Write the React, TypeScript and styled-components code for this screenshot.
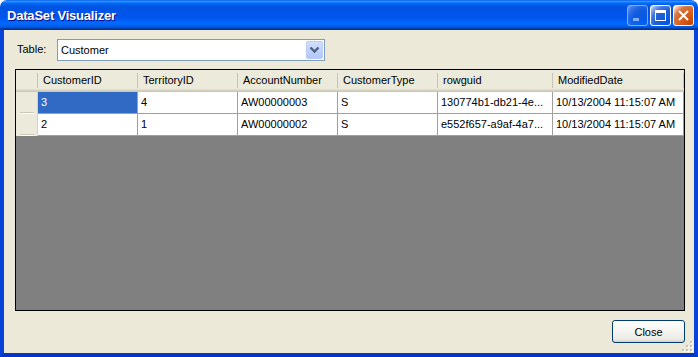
import styled, { createGlobalStyle } from 'styled-components';

const GlobalStyle = createGlobalStyle`
    html, body {
        margin: 0;
        padding: 0;
        background: #ffffff;
    }
    body {
        font-family: "Liberation Sans", Arial, sans-serif;
        font-size: 11px;
        color: #000;
    }
`;

const COLUMNS = '22px 100px 100px 100px 100px 115px 131px';

const Window = styled.div`
    width: 698px;
    height: 357px;
    display: flex;
    flex-direction: column;
    box-sizing: border-box;
`;

const TitleBar = styled.div`
    height: 30px;
    flex-shrink: 0;
    display: flex;
    align-items: center;
    justify-content: space-between;
    padding: 0 4px 0 7px;
    border-radius: 7px 7px 0 0;
    background: linear-gradient(
        180deg,
        #0058ee 0%,
        #3593ff 4%,
        #288eff 6%,
        #127dff 8%,
        #036ffc 10%,
        #0262ee 14%,
        #0057e5 20%,
        #0054e3 24%,
        #0055eb 56%,
        #005bf5 66%,
        #026afe 76%,
        #0062ef 86%,
        #0052d6 92%,
        #0040ab 94%,
        #003092 100%
    );
`;

const Title = styled.span`
    font-family: "Liberation Sans", Arial, sans-serif;
    font-weight: bold;
    font-size: 13px;
    color: #ffffff;
    text-shadow: 1px 1px #0f1089;
    letter-spacing: -0.2px;
`;

const Controls = styled.div`
    display: flex;
    gap: 2px;
`;

const CtrlButton = styled.div<{ $kind: 'min' | 'max' | 'close' }>`
    width: 21px;
    height: 21px;
    box-sizing: border-box;
    border: 1px solid #ffffff;
    border-radius: 3px;
    display: flex;
    align-items: center;
    justify-content: center;
    background: ${({ $kind }) =>
        $kind === 'close'
            ? 'radial-gradient(circle at 90% 90%, #cc4600 0%, #dc6527 55%, #cd7546 70%, #ffccb2 90%, white 100%)'
            : 'radial-gradient(circle at 90% 90%, #0054e9 0%, #2263d5 55%, #4479e4 70%, #a3bbec 90%, white 100%)'};
    opacity: ${({ $kind }) => ($kind === 'min' ? 0.5 : 1)};
`;

const Frame = styled.div`
    flex: 1;
    position: relative;
    display: flex;
    flex-direction: column;
    background: #ece9d8;
    border-left: 4px solid #0842d6;
    border-right: 4px solid #0842d6;
    border-bottom: 4px solid #0636c8;
    padding: 9px 9px 10px 11px;
    min-height: 0;
`;

const TableRow = styled.div`
    display: flex;
    align-items: center;
    height: 22px;
    margin-bottom: 8px;
`;

const Label = styled.span`
    width: 40px;
    margin-left: 2px;
    padding-bottom: 3px;
`;

const Combo = styled.div`
    width: 268px;
    height: 22px;
    box-sizing: border-box;
    border: 1px solid #7f9db9;
    background: #ffffff;
    display: flex;
    align-items: center;
    justify-content: space-between;
    padding: 0 1px 0 3px;
`;

const DropButton = styled.div`
    width: 17px;
    height: 18px;
    box-sizing: border-box;
    border-radius: 2px;
    border: 1px solid #b9ccf7;
    background: linear-gradient(180deg, #d2defc 0%, #c1d3fb 50%, #b3c8f8 100%);
    display: flex;
    align-items: center;
    justify-content: center;
`;

const Grid = styled.div`
    flex: 1;
    border: 1px solid #000000;
    background: #808080;
    display: flex;
    flex-direction: column;
    overflow: hidden;
`;

const Row = styled.div<{ $head?: boolean }>`
    display: grid;
    grid-template-columns: ${COLUMNS};
    height: 22px;
    flex-shrink: 0;
`;

const HeaderCell = styled.div`
    position: relative;
    background: #ebeadb;
    box-shadow: inset 0 -1px #cbc7b8, inset 0 -2px #d6d2c2, inset 0 -3px #e2decd;
    padding-left: 5px;
    line-height: 21px;
    white-space: nowrap;
    overflow: hidden;

    &::after {
        content: '';
        position: absolute;
        right: 0;
        top: 3px;
        bottom: 4px;
        width: 1px;
        background: #c7c5b2;
        box-shadow: 1px 0 #ffffff;
    }
`;

const RowHead = styled.div`
    position: relative;
    background: #ebeadb;
    border-right: 1px solid #d6d2c2;

    &::after {
        content: '';
        position: absolute;
        left: 4px;
        right: 3px;
        bottom: 1px;
        height: 1px;
        background: #cbc7b8;
        box-shadow: 0 1px #ffffff;
    }
`;

const Cell = styled.div<{ $selected?: boolean }>`
    background: ${({ $selected }) => ($selected ? '#316ac5' : '#ffffff')};
    color: ${({ $selected }) => ($selected ? '#ffffff' : '#000000')};
    border-right: 1px solid #a0a0a0;
    border-bottom: 1px solid #a0a0a0;
    padding-left: 3px;
    line-height: 21px;
    white-space: nowrap;
    overflow: hidden;
`;

const Footer = styled.div`
    display: flex;
    justify-content: flex-end;
    margin-top: 9px;
`;

const Button = styled.button`
    width: 73px;
    height: 23px;
    border: 1px solid #003c74;
    border-radius: 3px;
    background: linear-gradient(180deg, #ffffff 0%, #f4f4f0 50%, #ecebe6 86%, #d6d0c5 100%);
    font-family: "Liberation Sans", Arial, sans-serif;
    font-size: 11px;
    color: #000;
    padding: 0;
`;

const Grip = styled.svg`
    position: absolute;
    right: 0;
    bottom: 0;
`;

const headers = ['CustomerID', 'TerritoryID', 'AccountNumber', 'CustomerType', 'rowguid', 'ModifiedDate'];

const rows = [
    ['3', '4', 'AW00000003', 'S', '130774b1-db21-4e...', '10/13/2004 11:15:07 AM'],
    ['2', '1', 'AW00000002', 'S', 'e552f657-a9af-4a7...', '10/13/2004 11:15:07 AM'],
];

const App = () => {
    return (
        <>
            <GlobalStyle />
            <Window>
                <TitleBar>
                    <Title>DataSet Visualizer</Title>
                    <Controls>
                        <CtrlButton $kind="min">
                            <svg width="19" height="19" viewBox="0 0 19 19">
                                <rect x="5" y="12" width="6" height="3" fill="#ffffff" />
                            </svg>
                        </CtrlButton>
                        <CtrlButton $kind="max">
                            <svg width="19" height="19" viewBox="0 0 19 19">
                                <path d="M4 4h11v11H4z M5 7v7h9V7z" fill="#ffffff" fillRule="evenodd" />
                            </svg>
                        </CtrlButton>
                        <CtrlButton $kind="close">
                            <svg width="19" height="19" viewBox="0 0 19 19">
                                <path d="M5 5l9 9M14 5l-9 9" stroke="#ffffff" strokeWidth="2" />
                            </svg>
                        </CtrlButton>
                    </Controls>
                </TitleBar>
                <Frame>
                    <TableRow>
                        <Label>Table:</Label>
                        <Combo>
                            <span>Customer</span>
                            <DropButton>
                                <svg width="11" height="8" viewBox="0 0 11 8">
                                    <path d="M1.5 1.5l4 4 4-4" stroke="#4d6185" strokeWidth="2.4" fill="none" />
                                </svg>
                            </DropButton>
                        </Combo>
                    </TableRow>
                    <Grid>
                        <Row>
                            <HeaderCell />
                            {headers.map(h => (
                                <HeaderCell key={h}>{h}</HeaderCell>
                            ))}
                        </Row>
                        {rows.map((r, i) => (
                            <Row key={i}>
                                <RowHead />
                                {r.map((v, j) => (
                                    <Cell key={j} $selected={i === 0 && j === 0}>
                                        {v}
                                    </Cell>
                                ))}
                            </Row>
                        ))}
                    </Grid>
                    <Footer>
                        <Button>Close</Button>
                    </Footer>
                    <Grip width="12" height="12" viewBox="0 0 12 12">
                        {[
                            [8, 0],
                            [4, 4],
                            [8, 4],
                            [0, 8],
                            [4, 8],
                            [8, 8],
                        ].map(([x, y]) => (
                            <g key={`${x}-${y}`}>
                                <rect x={x + 1} y={y + 1} width="2" height="2" fill="#ffffff" />
                                <rect x={x} y={y} width="2" height="2" fill="#c6c3b4" />
                            </g>
                        ))}
                    </Grip>
                </Frame>
            </Window>
        </>
    );
};

export default App;
